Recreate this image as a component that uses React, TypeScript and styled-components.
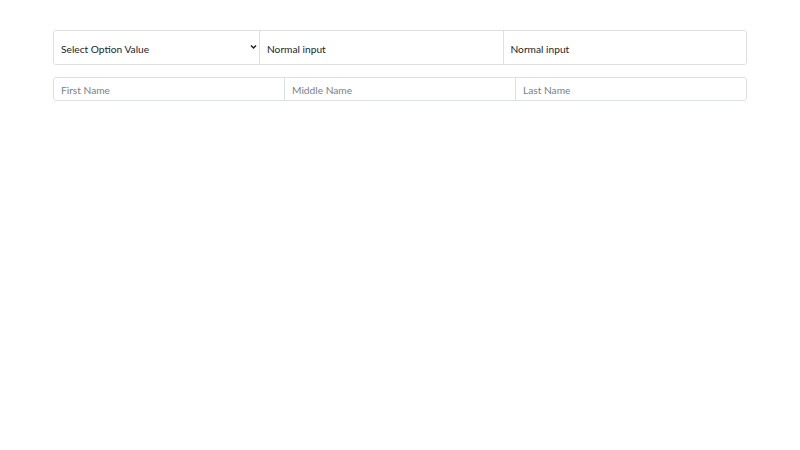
import styled, { createGlobalStyle } from 'styled-components';

const GlobalStyle = createGlobalStyle`
  body {
    margin: 0;
    background: #fff;
    font-family: Lato, 'Noto Sans', sans-serif;
  }
`;

const Page = styled.div`
  width: 694px;
  margin: 0 auto 0 53px;
  padding-top: 30px;
  display: flex;
  flex-direction: column;
  gap: 12px;
`;

const Group = styled.div<{ $height: number }>`
  display: flex;
  height: ${(p) => p.$height}px;
  box-sizing: border-box;
  border: 1px solid #dcdfe3;
  border-radius: 3px;
  overflow: hidden;
`;

const SelectWrap = styled.div`
  position: relative;
  width: 205px;
  flex: none;
  border-right: 1px solid #dcdfe3;
`;

const Select = styled.select`
  appearance: none;
  width: 100%;
  height: 100%;
  border: 0;
  outline: none;
  background: #fff;
  padding: 2px 20px 0 7px;
  font-family: inherit;
  font-size: 10.2px;
  color: #212529;
`;

const Chevron = styled.svg`
  position: absolute;
  right: 2px;
  top: 50%;
  margin-top: -3.5px;
  pointer-events: none;
`;

const Input = styled.input`
  flex: 1;
  min-width: 0;
  border: 0;
  outline: none;
  padding: 2px 7px 0;
  font-family: inherit;
  font-size: 10.2px;
  color: #212529;
  background: #fff;

  & + & {
    border-left: 1px solid #dcdfe3;
  }

  &::placeholder {
    color: #7a8189;
  }
`;

export default function App() {
  return (
    <>
      <GlobalStyle />
      <Page>
        <Group $height={35}>
          <SelectWrap>
            <Select defaultValue="">
              <option value="">Select Option Value</option>
              <option value="1">One</option>
              <option value="2">Two</option>
            </Select>
            <Chevron width="7" height="6" viewBox="0 0 7 6">
              <path d="M1 1.5 L3.5 4 L6 1.5" fill="none" stroke="#222" strokeWidth="1.5" />
            </Chevron>
          </SelectWrap>
          <Input defaultValue="Normal input" />
          <Input defaultValue="Normal input" />
        </Group>
        <Group $height={24}>
          <Input placeholder="First Name" />
          <Input placeholder="Middle Name" />
          <Input placeholder="Last Name" />
        </Group>
      </Page>
    </>
  );
}
